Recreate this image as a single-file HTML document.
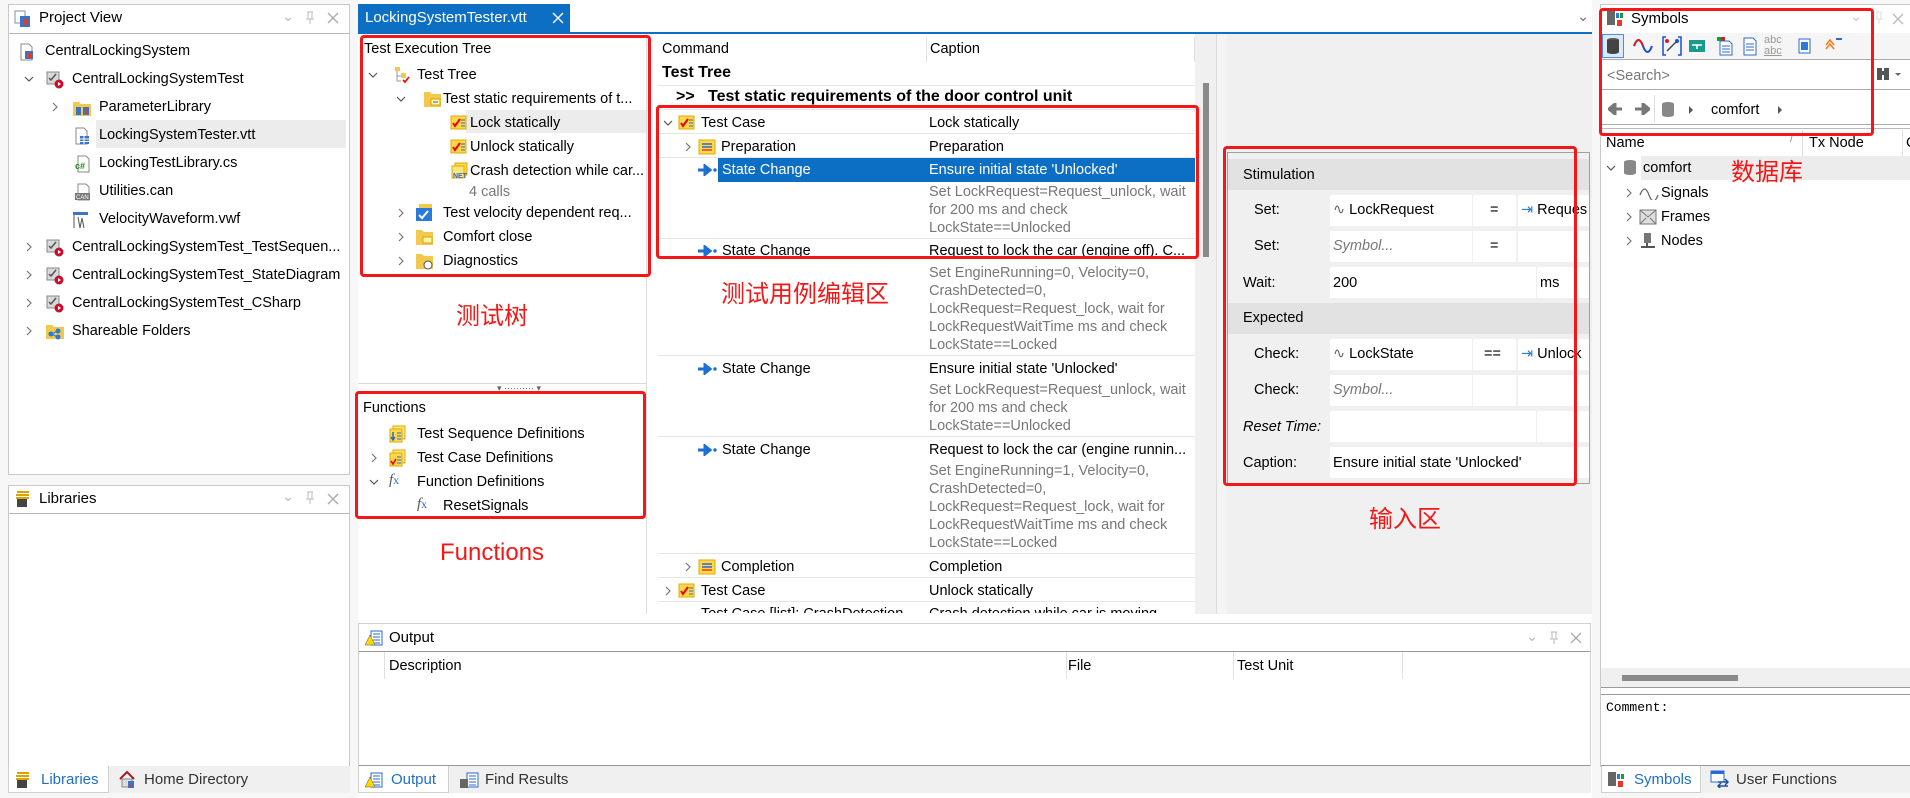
<!DOCTYPE html>
<html><head><meta charset="utf-8">
<style>
*{margin:0;padding:0;box-sizing:border-box}
body{width:1910px;height:798px;position:relative;overflow:hidden;background:#fff;font-family:"Liberation Sans","Noto Sans CJK SC",sans-serif}
.a{position:absolute}
.t{position:absolute;white-space:nowrap;font-size:14.5px;line-height:16px;color:#000}
.g{color:#777}
.b{font-weight:bold;font-size:16px}
.red{position:absolute;border:3px solid #f31717;border-radius:4px}
.cn{position:absolute;color:#f31717;font-size:24px;line-height:28px;white-space:nowrap;font-family:"Liberation Sans","Noto Sans CJK SC",sans-serif}
.hl{position:absolute;height:1px;background:#e6e6e6}
.cell{position:absolute;background:#fff}
</style></head><body>

<div class="a" style="left:0;top:0;width:358px;height:798px;background:#f7f7f7"></div>
<div class="a" style="left:1592px;top:0;width:318px;height:798px;background:#f7f7f7"></div>

<!-- ============ Project View ============ -->
<div class="a" style="left:8px;top:4px;width:342px;height:471px;border:1px solid #c9c9c9;background:#fff"></div>
<div class="a" style="left:9px;top:33px;width:340px;height:1px;background:#b5b5b5"></div>
<svg class="a" style="left:14px;top:10px" width="18" height="18"><rect x="1" y="1" width="10" height="12" fill="#fff" stroke="#7a8ca8"/><rect x="6" y="6" width="10" height="11" fill="#3a74c9"/><rect x="9" y="9" width="5" height="6" fill="#e53a2a"/></svg>
<div class="t" style="left:39px;top:10px;font-size:15px">Project View</div>
<div class="t g" style="left:282px;top:9px;color:#bbb">⌄</div>
<svg class="a" style="left:305px;top:11px" width="10" height="14"><path d="M2 1h6M3 1v7h4V1M1 8h8M5 8v5" stroke="#bbb" fill="none"/></svg>
<svg class="a" style="left:327px;top:12px" width="12" height="12"><path d="M1 1l10 10M11 1L1 11" stroke="#aaa" stroke-width="1.3"/></svg>

<div class="a" style="left:96px;top:120px;width:250px;height:28px;background:#ececec"></div>
<svg class="a" style="left:19px;top:43px" width="18" height="18"><path d="M2 1h8l3 3v13H2z" fill="#fff" stroke="#8a8a8a"/><rect x="6" y="8" width="8" height="8" fill="#3a74c9"/><rect x="8" y="10" width="4" height="5" fill="#e53a2a"/></svg>
<div class="t" style="left:45px;top:43px">CentralLockingSystem</div>

<svg class="a" style="left:24px;top:74px" width="10" height="10"><path d="M1 3l4 4 4-4" fill="none" stroke="#555" stroke-width="1.2"/></svg>
<svg class="a" style="left:46px;top:71px" width="18" height="18"><rect x="1" y="1" width="12" height="12" fill="#d9d9d9" stroke="#888"/><path d="M3 7l2 2 5-6" stroke="#555" stroke-width="1.5" fill="none"/><circle cx="13" cy="13" r="4.5" fill="#c8102e"/><path d="M12 11v4l3-2z" fill="#fff"/></svg>
<div class="t" style="left:72px;top:71px">CentralLockingSystemTest</div>

<svg class="a" style="left:50px;top:102px" width="10" height="10"><path d="M3 1l4 4-4 4" fill="none" stroke="#777" stroke-width="1.2"/></svg>
<svg class="a" style="left:72px;top:99px" width="20" height="18"><path d="M1 3h6l2 2h10v12H1z" fill="#f2c94c"/><rect x="4" y="8" width="5" height="8" fill="#3a74c9"/><rect x="11" y="8" width="6" height="8" fill="#3a74c9"/><rect x="13" y="10" width="3" height="5" fill="#e53a2a"/></svg>
<div class="t" style="left:99px;top:99px">ParameterLibrary</div>

<svg class="a" style="left:74px;top:127px" width="18" height="18"><path d="M2 1h8l3 3v13H2z" fill="#fff" stroke="#8a8a8a"/><rect x="6" y="9" width="9" height="8" fill="#3a74c9"/><path d="M6 12h9M6 14.5h9M10 9v8" stroke="#fff"/></svg>
<div class="t" style="left:99px;top:127px">LockingSystemTester.vtt</div>

<svg class="a" style="left:74px;top:155px" width="18" height="18"><path d="M4 1h8l3 3v13H4z" fill="#fff" stroke="#8a8a8a"/><text x="1" y="14" font-size="9" fill="#1a8a1a" font-family="Liberation Sans" font-weight="bold">c#</text></svg>
<div class="t" style="left:99px;top:155px">LockingTestLibrary.cs</div>

<svg class="a" style="left:74px;top:183px" width="18" height="18"><path d="M4 1h8l3 3v13H4z" fill="#fff" stroke="#8a8a8a"/><rect x="1" y="10" width="15" height="7" fill="#777"/><text x="2" y="16" font-size="6" fill="#fff" font-family="Liberation Sans">CAN</text></svg>
<div class="t" style="left:99px;top:183px">Utilities.can</div>

<svg class="a" style="left:72px;top:211px" width="18" height="18"><rect x="1" y="1" width="15" height="3" fill="#3a74c9"/><path d="M2 4v13M6 6l2 11 2-10 2 10" fill="none" stroke="#555"/></svg>
<div class="t" style="left:99px;top:211px">VelocityWaveform.vwf</div>

<svg class="a" style="left:24px;top:242px" width="10" height="10"><path d="M3 1l4 4-4 4" fill="none" stroke="#777" stroke-width="1.2"/></svg>
<svg class="a" style="left:46px;top:239px" width="18" height="18"><rect x="1" y="1" width="12" height="12" fill="#d9d9d9" stroke="#888"/><path d="M3 7l2 2 5-6" stroke="#555" stroke-width="1.5" fill="none"/><circle cx="13" cy="13" r="4.5" fill="#c8102e"/><path d="M12 11v4l3-2z" fill="#fff"/></svg>
<div class="t" style="left:72px;top:239px">CentralLockingSystemTest_TestSequen...</div>

<svg class="a" style="left:24px;top:270px" width="10" height="10"><path d="M3 1l4 4-4 4" fill="none" stroke="#777" stroke-width="1.2"/></svg>
<svg class="a" style="left:46px;top:267px" width="18" height="18"><rect x="1" y="1" width="12" height="12" fill="#d9d9d9" stroke="#888"/><path d="M3 7l2 2 5-6" stroke="#555" stroke-width="1.5" fill="none"/><circle cx="13" cy="13" r="4.5" fill="#c8102e"/><path d="M12 11v4l3-2z" fill="#fff"/></svg>
<div class="t" style="left:72px;top:267px">CentralLockingSystemTest_StateDiagram</div>

<svg class="a" style="left:24px;top:298px" width="10" height="10"><path d="M3 1l4 4-4 4" fill="none" stroke="#777" stroke-width="1.2"/></svg>
<svg class="a" style="left:46px;top:295px" width="18" height="18"><rect x="1" y="1" width="12" height="12" fill="#d9d9d9" stroke="#888"/><path d="M3 7l2 2 5-6" stroke="#555" stroke-width="1.5" fill="none"/><circle cx="13" cy="13" r="4.5" fill="#c8102e"/><path d="M12 11v4l3-2z" fill="#fff"/></svg>
<div class="t" style="left:72px;top:295px">CentralLockingSystemTest_CSharp</div>

<svg class="a" style="left:24px;top:326px" width="10" height="10"><path d="M3 1l4 4-4 4" fill="none" stroke="#777" stroke-width="1.2"/></svg>
<svg class="a" style="left:45px;top:322px" width="20" height="18"><path d="M1 3h6l2 2h10v12H1z" fill="#f2c94c"/><circle cx="6" cy="12" r="2.5" fill="#2a7ad8"/><circle cx="13" cy="9" r="2.5" fill="#2a7ad8"/><circle cx="13" cy="15" r="2.5" fill="#2a7ad8"/><path d="M6 12l7-3M6 12l7 3" stroke="#2a7ad8"/></svg>
<div class="t" style="left:72px;top:323px">Shareable Folders</div>

<!-- ============ Libraries ============ -->
<div class="a" style="left:8px;top:485px;width:342px;height:282px;border:1px solid #c9c9c9;background:#fff"></div>
<div class="a" style="left:9px;top:513px;width:340px;height:1px;background:#b5b5b5"></div>
<svg class="a" style="left:14px;top:490px" width="18" height="18"><path d="M3 2h12M2 5h13M2 8h13" stroke="#d9a400" stroke-width="2"/><rect x="3" y="9" width="10" height="8" fill="#444"/></svg>
<div class="t" style="left:39px;top:491px;font-size:15px">Libraries</div>
<div class="t g" style="left:282px;top:489px;color:#bbb">⌄</div>
<svg class="a" style="left:305px;top:491px" width="10" height="14"><path d="M2 1h6M3 1v7h4V1M1 8h8M5 8v5" stroke="#bbb" fill="none"/></svg>
<svg class="a" style="left:327px;top:493px" width="12" height="12"><path d="M1 1l10 10M11 1L1 11" stroke="#aaa" stroke-width="1.3"/></svg>
<div class="a" style="left:8px;top:766px;width:101px;height:27px;border:1px solid #d0d0d0;border-top:none;background:#fff"></div>
<div class="a" style="left:109px;top:766px;width:241px;height:27px;background:#f0f0f0"></div>
<svg class="a" style="left:14px;top:771px" width="18" height="18"><path d="M3 2h12M2 5h13M2 8h13" stroke="#d9a400" stroke-width="2"/><rect x="3" y="9" width="10" height="8" fill="#444"/></svg>
<div class="t" style="left:41px;top:772px;color:#1f6fc5;font-size:15px">Libraries</div>
<svg class="a" style="left:118px;top:770px" width="20" height="18"><path d="M2 9L9 2l7 7" fill="none" stroke="#a31b2a" stroke-width="2"/><rect x="4" y="9" width="10" height="8" fill="#ddd" stroke="#888"/><rect x="10" y="11" width="6" height="7" fill="#2a7ad8"/><rect x="11" y="13" width="3" height="4" fill="#e53a2a"/></svg>
<div class="t" style="left:144px;top:772px;color:#333;font-size:15px">Home Directory</div>

<!-- ============ Editor tab bar ============ -->
<div class="a" style="left:358px;top:4px;width:212px;height:29px;background:#0c6fc4"></div>
<div class="t" style="left:365px;top:10px;color:#fff;font-size:15px">LockingSystemTester.vtt</div>
<svg class="a" style="left:552px;top:12px" width="12" height="12"><path d="M1 1l10 10M11 1L1 11" stroke="#fff" stroke-width="1.4"/></svg>
<div class="a" style="left:358px;top:32px;width:1234px;height:2px;background:#0c6fc4"></div>
<div class="t" style="left:1577px;top:9px;color:#777">⌄</div>

<!-- ============ Test Execution Tree ============ -->
<div class="a" style="left:358px;top:34px;width:289px;height:350px;background:#fff"></div>
<div class="a" style="left:646px;top:34px;width:1px;height:580px;background:#ddd"></div>
<div class="a" style="left:358px;top:383px;width:289px;height:1px;background:#d8d8d8"></div>
<div class="t g" style="left:497px;top:380px;font-size:9px;color:#666">▾ ·········· ▾</div>
<div class="t" style="left:364px;top:41px">Test Execution Tree</div>
<svg class="a" style="left:368px;top:70px" width="10" height="10"><path d="M1 3l4 4 4-4" fill="none" stroke="#555" stroke-width="1.2"/></svg>
<svg class="a" style="left:394px;top:66px" width="18" height="18"><rect x="1" y="1" width="5" height="4" fill="#f2c94c"/><path d="M3 5v10h4M3 10h4" stroke="#999" fill="none"/><rect x="7" y="7" width="5" height="5" fill="#f2c94c"/><path d="M9 14l2 2 4-5" stroke="#e00" stroke-width="1.6" fill="none"/></svg>
<div class="t" style="left:417px;top:67px">Test Tree</div>
<svg class="a" style="left:396px;top:94px" width="10" height="10"><path d="M1 3l4 4 4-4" fill="none" stroke="#555" stroke-width="1.2"/></svg>
<svg class="a" style="left:423px;top:90px" width="20" height="18"><path d="M1 2h6l2 2h9v13H1z" fill="#f2c94c"/><rect x="8" y="9" width="9" height="6" fill="#fff3b0" stroke="#d9a400"/><path d="M10 12h5" stroke="#2a6ad0"/></svg>
<div class="t" style="left:443px;top:91px">Test static requirements of t...</div>
<div class="a" style="left:466px;top:110px;width:180px;height:23px;background:#ececec"></div>
<svg class="a" style="left:450px;top:114px" width="18" height="18"><rect x="1" y="2" width="15" height="13" fill="#ffd84a" stroke="#e0a800"/><path d="M3 9l2 3 5-7" stroke="#e00" stroke-width="2" fill="none"/><path d="M11 6h4M11 9h4M11 12h4" stroke="#2a6ad0"/></svg>
<div class="t" style="left:470px;top:115px">Lock statically</div>
<svg class="a" style="left:450px;top:138px" width="18" height="18"><rect x="1" y="2" width="15" height="13" fill="#ffd84a" stroke="#e0a800"/><path d="M3 9l2 3 5-7" stroke="#e00" stroke-width="2" fill="none"/><path d="M11 6h4M11 9h4M11 12h4" stroke="#2a6ad0"/></svg>
<div class="t" style="left:470px;top:139px">Unlock statically</div>
<svg class="a" style="left:450px;top:162px" width="18" height="18"><rect x="5" y="1" width="12" height="12" fill="#ffd84a" stroke="#e0a800"/><rect x="2" y="4" width="12" height="12" fill="#ffe680" stroke="#e0a800"/><text x="3" y="16" font-size="7" fill="#2a6ad0" font-family="Liberation Sans" font-weight="bold">NET</text></svg>
<div class="t" style="left:470px;top:163px">Crash detection while car...</div>
<div class="t g" style="left:469px;top:184px">4 calls</div>
<svg class="a" style="left:396px;top:208px" width="10" height="10"><path d="M3 1l4 4-4 4" fill="none" stroke="#777" stroke-width="1.2"/></svg>
<svg class="a" style="left:415px;top:203px" width="20" height="19"><rect x="4" y="1" width="13" height="5" fill="#f2c94c"/><rect x="1" y="5" width="16" height="13" fill="#2a7ad8"/><path d="M4 12l3 3 6-7" stroke="#fff" stroke-width="2" fill="none"/></svg>
<div class="t" style="left:443px;top:205px">Test velocity dependent req...</div>
<svg class="a" style="left:396px;top:232px" width="10" height="10"><path d="M3 1l4 4-4 4" fill="none" stroke="#777" stroke-width="1.2"/></svg>
<svg class="a" style="left:415px;top:228px" width="20" height="18"><path d="M1 2h6l2 2h9v13H1z" fill="#f2c94c"/><rect x="8" y="9" width="9" height="6" fill="#fff3b0" stroke="#d9a400"/></svg>
<div class="t" style="left:443px;top:229px">Comfort close</div>
<svg class="a" style="left:396px;top:256px" width="10" height="10"><path d="M3 1l4 4-4 4" fill="none" stroke="#777" stroke-width="1.2"/></svg>
<svg class="a" style="left:415px;top:252px" width="20" height="19"><path d="M1 2h6l2 2h9v13H1z" fill="#f2c94c"/><circle cx="13" cy="13" r="4" fill="#fff" stroke="#555"/></svg>
<div class="t" style="left:443px;top:253px">Diagnostics</div>
<div class="red" style="left:360px;top:35px;width:291px;height:242px"></div>
<div class="cn" style="left:456px;top:303px">测试树</div>

<!-- ============ Functions ============ -->
<div class="t" style="left:363px;top:400px">Functions</div>
<svg class="a" style="left:388px;top:425px" width="18" height="18"><rect x="5" y="1" width="12" height="13" fill="#ffe680" stroke="#e0a800"/><rect x="2" y="4" width="12" height="13" fill="#ffd84a" stroke="#e0a800"/><path d="M5 7v7M3 12l2 3 2-3" stroke="#2a6ad0" stroke-width="1.5" fill="none"/><path d="M9 8h4M9 11h4M9 14h4" stroke="#2a6ad0"/></svg>
<div class="t" style="left:417px;top:426px">Test Sequence Definitions</div>
<svg class="a" style="left:369px;top:453px" width="10" height="10"><path d="M3 1l4 4-4 4" fill="none" stroke="#777" stroke-width="1.2"/></svg>
<svg class="a" style="left:388px;top:449px" width="18" height="18"><rect x="5" y="1" width="12" height="13" fill="#ffe680" stroke="#e0a800"/><rect x="2" y="4" width="12" height="13" fill="#ffd84a" stroke="#e0a800"/><path d="M3 12l2 3 3-5" stroke="#e00" stroke-width="1.6" fill="none"/><path d="M9 8h4M9 11h4M9 14h4" stroke="#2a6ad0"/></svg>
<div class="t" style="left:417px;top:450px">Test Case Definitions</div>
<svg class="a" style="left:369px;top:477px" width="10" height="10"><path d="M1 3l4 4 4-4" fill="none" stroke="#555" stroke-width="1.2"/></svg>
<div class="t" style="left:389px;top:472px;font-family:'Liberation Serif',serif;font-style:italic;color:#555;font-size:15px">f<span style="color:#2a6ad0;font-style:normal;font-size:12px">x</span></div>
<div class="t" style="left:417px;top:474px">Function Definitions</div>
<div class="t" style="left:417px;top:496px;font-family:'Liberation Serif',serif;font-style:italic;color:#555;font-size:15px">f<span style="color:#2a6ad0;font-style:normal;font-size:12px">x</span></div>
<div class="t" style="left:443px;top:498px">ResetSignals</div>
<div class="red" style="left:355px;top:391px;width:291px;height:128px"></div>
<div class="cn" style="left:440px;top:539px">Functions</div>

<!-- ============ Grid ============ -->
<div class="a" style="left:656px;top:34px;width:560px;height:580px;background:#fff"></div>
<div class="a" style="left:1195px;top:34px;width:21px;height:580px;background:#f0f0f0"></div>
<div class="a" style="left:1203px;top:83px;width:6px;height:174px;background:#8a8a8a"></div>
<div class="a" style="left:1216px;top:34px;width:11px;height:580px;background:#f4f4f4;border-left:1px solid #ddd"></div>
<div class="a" style="left:926px;top:37px;width:1px;height:25px;background:#e0e0e0"></div>
<div class="a" style="left:1194px;top:37px;width:1px;height:25px;background:#e0e0e0"></div>
<div class="t" style="left:662px;top:41px">Command</div>
<div class="t" style="left:930px;top:41px">Caption</div>
<div class="t b" style="left:662px;top:65px">Test Tree</div>
<div class="hl" style="left:658px;top:85px;width:537px"></div>
<div class="t b" style="left:676px;top:89px">&gt;&gt;&nbsp;&nbsp;&nbsp;Test static requirements of the door control unit</div>
<div class="hl" style="left:658px;top:109px;width:537px"></div>

<svg class="a" style="left:663px;top:118px" width="10" height="10"><path d="M1 3l4 4 4-4" fill="none" stroke="#555" stroke-width="1.2"/></svg>
<svg class="a" style="left:678px;top:114px" width="18" height="18"><rect x="1" y="2" width="15" height="13" fill="#ffd84a" stroke="#e0a800"/><path d="M3 9l2 3 5-7" stroke="#e00" stroke-width="2" fill="none"/><path d="M11 6h4M11 9h4M11 12h4" stroke="#2a6ad0"/></svg>
<div class="t" style="left:701px;top:115px">Test Case</div>
<div class="t" style="left:929px;top:115px">Lock statically</div>
<div class="hl" style="left:658px;top:133px;width:537px"></div>
<svg class="a" style="left:683px;top:142px" width="10" height="10"><path d="M3 1l4 4-4 4" fill="none" stroke="#777" stroke-width="1.2"/></svg>
<svg class="a" style="left:698px;top:138px" width="18" height="18"><rect x="1" y="2" width="16" height="14" fill="#ffd84a" stroke="#e0a800"/><path d="M4 6h10M4 9h10" stroke="#2a6ad0" stroke-width="1.5"/><path d="M4 12h10" stroke="#e53a2a" stroke-width="1.5"/></svg>
<div class="t" style="left:721px;top:139px">Preparation</div>
<div class="t" style="left:929px;top:139px">Preparation</div>
<div class="hl" style="left:658px;top:157px;width:537px"></div>

<div class="a" style="left:718px;top:158px;width:477px;height:24px;background:#0c6fc4"></div>
<svg class="a" style="left:697px;top:164px" width="22" height="12"><path d="M1 6h9M8 2l5 4-5 4z" stroke="#1d6fd0" stroke-width="3" fill="#1d6fd0"/><circle cx="18" cy="6" r="1.7" fill="#1d6fd0"/></svg>
<div class="t" style="left:722px;top:162px;color:#fff">State Change</div>
<div class="t" style="left:929px;top:162px;color:#fff">Ensure initial state 'Unlocked'</div>
<div class="t g" style="left:929px;top:184px">Set LockRequest=Request_unlock, wait</div>
<div class="t g" style="left:929px;top:202px">for 200 ms and check</div>
<div class="t g" style="left:929px;top:220px">LockState==Unlocked</div>
<div class="hl" style="left:658px;top:238px;width:537px"></div>

<svg class="a" style="left:697px;top:245px" width="22" height="12"><path d="M1 6h9M8 2l5 4-5 4z" stroke="#1d6fd0" stroke-width="3" fill="#1d6fd0"/><circle cx="18" cy="6" r="1.7" fill="#1d6fd0"/></svg>
<div class="t" style="left:722px;top:243px">State Change</div>
<div class="t" style="left:929px;top:243px">Request to lock the car (engine off). C...</div>
<div class="t g" style="left:929px;top:265px">Set EngineRunning=0, Velocity=0,</div>
<div class="t g" style="left:929px;top:283px">CrashDetected=0,</div>
<div class="t g" style="left:929px;top:301px">LockRequest=Request_lock, wait for</div>
<div class="t g" style="left:929px;top:319px">LockRequestWaitTime ms and check</div>
<div class="t g" style="left:929px;top:337px">LockState==Locked</div>
<div class="hl" style="left:658px;top:355px;width:537px"></div>

<svg class="a" style="left:697px;top:363px" width="22" height="12"><path d="M1 6h9M8 2l5 4-5 4z" stroke="#1d6fd0" stroke-width="3" fill="#1d6fd0"/><circle cx="18" cy="6" r="1.7" fill="#1d6fd0"/></svg>
<div class="t" style="left:722px;top:361px">State Change</div>
<div class="t" style="left:929px;top:361px">Ensure initial state 'Unlocked'</div>
<div class="t g" style="left:929px;top:382px">Set LockRequest=Request_unlock, wait</div>
<div class="t g" style="left:929px;top:400px">for 200 ms and check</div>
<div class="t g" style="left:929px;top:418px">LockState==Unlocked</div>
<div class="hl" style="left:658px;top:436px;width:537px"></div>

<svg class="a" style="left:697px;top:444px" width="22" height="12"><path d="M1 6h9M8 2l5 4-5 4z" stroke="#1d6fd0" stroke-width="3" fill="#1d6fd0"/><circle cx="18" cy="6" r="1.7" fill="#1d6fd0"/></svg>
<div class="t" style="left:722px;top:442px">State Change</div>
<div class="t" style="left:929px;top:442px">Request to lock the car (engine runnin...</div>
<div class="t g" style="left:929px;top:463px">Set EngineRunning=1, Velocity=0,</div>
<div class="t g" style="left:929px;top:481px">CrashDetected=0,</div>
<div class="t g" style="left:929px;top:499px">LockRequest=Request_lock, wait for</div>
<div class="t g" style="left:929px;top:517px">LockRequestWaitTime ms and check</div>
<div class="t g" style="left:929px;top:535px">LockState==Locked</div>
<div class="hl" style="left:658px;top:553px;width:537px"></div>

<svg class="a" style="left:683px;top:562px" width="10" height="10"><path d="M3 1l4 4-4 4" fill="none" stroke="#777" stroke-width="1.2"/></svg>
<svg class="a" style="left:698px;top:558px" width="18" height="18"><rect x="1" y="2" width="16" height="14" fill="#ffd84a" stroke="#e0a800"/><path d="M4 6h10M4 9h10" stroke="#2a6ad0" stroke-width="1.5"/><path d="M4 12h10" stroke="#e53a2a" stroke-width="1.5"/></svg>
<div class="t" style="left:721px;top:559px">Completion</div>
<div class="t" style="left:929px;top:559px">Completion</div>
<div class="hl" style="left:658px;top:577px;width:537px"></div>
<svg class="a" style="left:663px;top:586px" width="10" height="10"><path d="M3 1l4 4-4 4" fill="none" stroke="#777" stroke-width="1.2"/></svg>
<svg class="a" style="left:678px;top:582px" width="18" height="18"><rect x="1" y="2" width="15" height="13" fill="#ffd84a" stroke="#e0a800"/><path d="M3 9l2 3 5-7" stroke="#e00" stroke-width="2" fill="none"/><path d="M11 6h4M11 9h4M11 12h4" stroke="#2a6ad0"/></svg>
<div class="t" style="left:701px;top:583px">Test Case</div>
<div class="t" style="left:929px;top:583px">Unlock statically</div>
<div class="hl" style="left:658px;top:601px;width:537px"></div>
<div class="a" style="left:658px;top:602px;width:537px;height:11px;overflow:hidden">
  <div class="t" style="left:43px;top:4px">Test Case [list]: CrashDetection</div>
  <div class="t" style="left:271px;top:4px">Crash detection while car is moving</div>
</div>
<div class="red" style="left:656px;top:105px;width:543px;height:154px"></div>
<div class="cn" style="left:721px;top:281px">测试用例编辑区</div>

<!-- ============ Input area ============ -->
<div class="a" style="left:1227px;top:34px;width:365px;height:580px;background:#f0f0f0"></div>
<div class="a" style="left:1227px;top:152px;width:363px;height:332px;border:1px solid #a0a0a0;background:#f0f0f0"></div>
<div class="a" style="left:1228px;top:159px;width:361px;height:31px;background:#e2e2e2"></div>
<div class="t" style="left:1243px;top:167px">Stimulation</div>
<div class="t" style="left:1254px;top:202px">Set:</div>
<div class="cell" style="left:1330px;top:195px;width:142px;height:31px"></div>
<div class="cell" style="left:1473px;top:195px;width:43px;height:31px"></div>
<div class="cell" style="left:1518px;top:195px;width:71px;height:31px"></div>
<div class="t" style="left:1333px;top:202px"><span style="color:#666">∿</span> LockRequest</div>
<div class="t" style="left:1490px;top:202px">=</div>
<div class="t" style="left:1521px;top:202px;width:66px;overflow:hidden"><span style="color:#2a7ad8">⇥</span> Request</div>
<div class="t" style="left:1254px;top:238px">Set:</div>
<div class="cell" style="left:1330px;top:231px;width:142px;height:31px"></div>
<div class="cell" style="left:1473px;top:231px;width:43px;height:31px"></div>
<div class="cell" style="left:1518px;top:231px;width:71px;height:31px"></div>
<div class="t g" style="left:1333px;top:238px;font-style:italic">Symbol...</div>
<div class="t" style="left:1490px;top:238px">=</div>
<div class="t" style="left:1243px;top:275px">Wait:</div>
<div class="cell" style="left:1330px;top:267px;width:206px;height:31px"></div>
<div class="cell" style="left:1537px;top:267px;width:52px;height:31px"></div>
<div class="t" style="left:1333px;top:275px">200</div>
<div class="t" style="left:1540px;top:275px">ms</div>
<div class="a" style="left:1228px;top:303px;width:361px;height:31px;background:#e2e2e2"></div>
<div class="t" style="left:1243px;top:310px">Expected</div>
<div class="t" style="left:1254px;top:346px">Check:</div>
<div class="cell" style="left:1330px;top:339px;width:142px;height:31px"></div>
<div class="cell" style="left:1473px;top:339px;width:43px;height:31px"></div>
<div class="cell" style="left:1518px;top:339px;width:71px;height:31px"></div>
<div class="t" style="left:1333px;top:346px"><span style="color:#666">∿</span> LockState</div>
<div class="t" style="left:1484px;top:346px">==</div>
<div class="t" style="left:1521px;top:346px;width:66px;overflow:hidden"><span style="color:#2a7ad8">⇥</span> Unlock</div>
<div class="t" style="left:1254px;top:382px">Check:</div>
<div class="cell" style="left:1330px;top:375px;width:142px;height:31px"></div>
<div class="cell" style="left:1473px;top:375px;width:43px;height:31px"></div>
<div class="cell" style="left:1518px;top:375px;width:71px;height:31px"></div>
<div class="t g" style="left:1333px;top:382px;font-style:italic">Symbol...</div>
<div class="t" style="left:1243px;top:419px;font-style:italic">Reset Time:</div>
<div class="cell" style="left:1330px;top:411px;width:206px;height:31px"></div>
<div class="cell" style="left:1537px;top:411px;width:52px;height:31px"></div>
<div class="t" style="left:1243px;top:455px">Caption:</div>
<div class="cell" style="left:1330px;top:447px;width:259px;height:31px"></div>
<div class="t" style="left:1333px;top:455px">Ensure initial state 'Unlocked'</div>
<div class="red" style="left:1223px;top:146px;width:354px;height:340px"></div>
<div class="cn" style="left:1369px;top:506px">输入区</div>

<!-- ============ Output ============ -->
<div class="a" style="left:358px;top:623px;width:1233px;height:144px;border:1px solid #d0d0d0"></div>
<svg class="a" style="left:365px;top:629px" width="18" height="18"><rect x="6" y="2" width="11" height="14" fill="#fff" stroke="#2a6ad0"/><path d="M8 5h7M8 8h7M8 11h7M8 14h7" stroke="#2a6ad0"/><path d="M5 6l5 10H0z" fill="#ffd800" stroke="#555" stroke-width=".5"/></svg>
<div class="t" style="left:389px;top:630px;font-size:15px">Output</div>
<div class="t" style="left:1526px;top:629px;color:#bbb">⌄</div>
<svg class="a" style="left:1549px;top:631px" width="10" height="14"><path d="M2 1h6M3 1v7h4V1M1 8h8M5 8v5" stroke="#bbb" fill="none"/></svg>
<svg class="a" style="left:1570px;top:632px" width="12" height="12"><path d="M1 1l10 10M11 1L1 11" stroke="#aaa" stroke-width="1.3"/></svg>
<div class="a" style="left:359px;top:651px;width:1231px;height:1px;background:#999"></div>
<div class="a" style="left:359px;top:765px;width:1231px;height:1px;background:#999"></div>
<div class="a" style="left:384px;top:652px;width:1px;height:27px;background:#e0e0e0"></div>
<div class="a" style="left:1066px;top:652px;width:1px;height:27px;background:#e0e0e0"></div>
<div class="a" style="left:1233px;top:652px;width:1px;height:27px;background:#e0e0e0"></div>
<div class="a" style="left:1402px;top:652px;width:1px;height:27px;background:#e0e0e0"></div>
<div class="t" style="left:389px;top:658px">Description</div>
<div class="t" style="left:1068px;top:658px">File</div>
<div class="t" style="left:1237px;top:658px">Test Unit</div>
<div class="a" style="left:358px;top:766px;width:91px;height:27px;border:1px solid #d0d0d0;border-top:none;background:#fff"></div>
<div class="a" style="left:449px;top:766px;width:1142px;height:27px;background:#f0f0f0"></div>
<svg class="a" style="left:365px;top:771px" width="18" height="18"><rect x="6" y="2" width="11" height="14" fill="#fff" stroke="#2a6ad0"/><path d="M8 5h7M8 8h7M8 11h7M8 14h7" stroke="#2a6ad0"/><path d="M5 6l5 10H0z" fill="#ffd800" stroke="#555" stroke-width=".5"/></svg>
<div class="t" style="left:391px;top:772px;color:#1f6fc5;font-size:15px">Output</div>
<svg class="a" style="left:459px;top:771px" width="20" height="18"><rect x="8" y="2" width="11" height="14" fill="#fff" stroke="#2a6ad0"/><path d="M10 5h7M10 8h7M10 11h7M10 14h7" stroke="#2a6ad0"/><rect x="1" y="8" width="8" height="9" fill="#666"/></svg>
<div class="t" style="left:485px;top:772px;color:#333;font-size:15px">Find Results</div>

<!-- ============ Symbols ============ -->
<div class="a" style="left:1600px;top:4px;width:310px;height:763px;border:1px solid #c9c9c9;border-right:none;background:#fff"></div>
<svg class="a" style="left:1606px;top:10px" width="18" height="18"><rect x="1" y="1" width="8" height="14" fill="#666"/><rect x="10" y="3" width="3" height="5" fill="#2a7ad8"/><rect x="14" y="3" width="3" height="5" fill="#1a9a3a"/><rect x="11" y="10" width="5" height="6" fill="#e53a2a"/></svg>
<div class="t" style="left:1631px;top:11px;font-size:15px">Symbols</div>
<div class="t" style="left:1850px;top:9px;color:#ccc">⌄</div>
<svg class="a" style="left:1874px;top:11px" width="10" height="14"><path d="M2 1h6M3 1v7h4V1M1 8h8M5 8v5" stroke="#ddd" fill="none"/></svg>
<svg class="a" style="left:1892px;top:13px" width="12" height="12"><path d="M1 1l10 10M11 1L1 11" stroke="#bbb" stroke-width="1.3"/></svg>
<div class="a" style="left:1601px;top:33px;width:309px;height:27px;background:#f5f5f5;border-bottom:1px solid #aaa"></div>
<div class="a" style="left:1602px;top:34px;width:22px;height:24px;border:1px solid #4a90e2;background:#dbe9f9"></div>
<svg class="a" style="left:1606px;top:37px" width="14" height="18"><ellipse cx="7" cy="3" rx="6" ry="2" fill="#555"/><rect x="1" y="3" width="12" height="12" fill="#444"/><ellipse cx="7" cy="15" rx="6" ry="2" fill="#444"/></svg>
<svg class="a" style="left:1633px;top:37px" width="20" height="18"><path d="M1 9c3-8 6-8 9 0s6 8 9 0" fill="none" stroke="#1d4fd0" stroke-width="2"/><path d="M1 9c3-8 6-8 9 0" fill="none" stroke="#d42020" stroke-width="2"/></svg>
<svg class="a" style="left:1662px;top:36px" width="20" height="20"><path d="M4 1H1v18h3M16 1h3v18h-3" stroke="#1d4fd0" fill="none" stroke-width="1.5"/><path d="M5 15l10-10" stroke="#444" stroke-width="1.5"/><circle cx="5" cy="5" r="2" fill="#d42020"/><circle cx="15" cy="5" r="2" fill="#1d4fd0"/></svg>
<svg class="a" style="left:1688px;top:39px" width="18" height="14"><rect x="1" y="1" width="16" height="12" fill="#1a9a8a"/><path d="M4 6h10M9 6v4" stroke="#fff" stroke-width="1.5"/></svg>
<svg class="a" style="left:1716px;top:36px" width="18" height="20"><rect x="1" y="1" width="4" height="4" fill="#1a9a3a"/><rect x="5" y="1" width="4" height="4" fill="#d42020"/><path d="M4 5h9l3 3v11H4z" fill="#fff" stroke="#2a6ad0"/><path d="M6 10h8M6 13h8M6 16h8" stroke="#2a6ad0"/></svg>
<svg class="a" style="left:1742px;top:36px" width="18" height="20"><path d="M2 2h9l3 3v14H2z" fill="#fff" stroke="#2a6ad0"/><path d="M4 8h8M4 11h8M4 14h8" stroke="#2a6ad0"/></svg>
<div class="t" style="left:1764px;top:35px;font-size:11px;line-height:11px;color:#999">abc<br><u>abc</u></div>
<svg class="a" style="left:1797px;top:37px" width="16" height="18"><rect x="2" y="2" width="11" height="14" fill="#fff" stroke="#2a6ad0"/><rect x="4" y="5" width="7" height="8" fill="#2a7ad8"/></svg>
<svg class="a" style="left:1824px;top:36px" width="20" height="16"><path d="M2 9l4-5 4 5M2 13l4-5 4 5" fill="none" stroke="#f08020" stroke-width="1.6"/><path d="M12 3h6" stroke="#2a6ad0" stroke-width="2"/></svg>
<div class="a" style="left:1601px;top:60px;width:309px;height:30px;background:#fff;border-bottom:1px solid #aaa"></div>
<div class="t" style="left:1607px;top:68px;color:#777">&lt;Search&gt;</div>
<svg class="a" style="left:1875px;top:64px" width="28" height="20"><rect x="2" y="4" width="5" height="12" fill="#555"/><rect x="9" y="4" width="5" height="12" fill="#555"/><rect x="5" y="7" width="6" height="4" fill="#555"/><path d="M20 9l3 3 3-3z" fill="#666"/></svg>
<div class="a" style="left:1601px;top:91px;width:309px;height:34px;background:#fff;border-bottom:1px solid #aaa"></div>
<svg class="a" style="left:1608px;top:103px" width="16" height="12"><path d="M14 6H5M7 1L1 6l6 5z" stroke="#777" stroke-width="3" fill="#777"/></svg>
<svg class="a" style="left:1634px;top:103px" width="16" height="12"><path d="M1 6h9M9 1l6 5-6 5z" stroke="#777" stroke-width="3" fill="#777"/></svg>
<div class="a" style="left:1654px;top:95px;width:1px;height:27px;background:#ddd"></div>
<svg class="a" style="left:1661px;top:101px" width="14" height="18"><ellipse cx="7" cy="3" rx="6" ry="2" fill="#888"/><rect x="1" y="3" width="12" height="11" fill="#888"/><ellipse cx="7" cy="14" rx="6" ry="2" fill="#888"/></svg>
<svg class="a" style="left:1689px;top:106px" width="5" height="8"><path d="M0 0l4 4-4 4z" fill="#555"/></svg>
<div class="t" style="left:1711px;top:102px">comfort</div>
<svg class="a" style="left:1778px;top:106px" width="5" height="8"><path d="M0 0l4 4-4 4z" fill="#555"/></svg>
<div class="a" style="left:1601px;top:128px;width:309px;height:1px;background:#bbb"></div>
<div class="t" style="left:1606px;top:135px">Name</div>
<div class="t" style="left:1790px;top:132px;font-size:10px;color:#888">/</div>
<div class="a" style="left:1802px;top:130px;width:1px;height:26px;background:#e0e0e0"></div>
<div class="t" style="left:1809px;top:135px">Tx Node</div>
<div class="a" style="left:1902px;top:130px;width:1px;height:26px;background:#e0e0e0"></div>
<div class="t" style="left:1906px;top:135px">C</div>
<div class="a" style="left:1641px;top:156px;width:269px;height:24px;background:#ececec"></div>
<svg class="a" style="left:1606px;top:163px" width="10" height="10"><path d="M1 3l4 4 4-4" fill="none" stroke="#555" stroke-width="1.2"/></svg>
<svg class="a" style="left:1623px;top:159px" width="14" height="18"><ellipse cx="7" cy="3" rx="6" ry="2" fill="#888"/><rect x="1" y="3" width="12" height="11" fill="#888"/><ellipse cx="7" cy="14" rx="6" ry="2" fill="#888"/></svg>
<div class="t" style="left:1643px;top:160px">comfort</div>
<svg class="a" style="left:1624px;top:188px" width="10" height="10"><path d="M3 1l4 4-4 4" fill="none" stroke="#777" stroke-width="1.2"/></svg>
<svg class="a" style="left:1639px;top:186px" width="20" height="14"><path d="M1 9c3-8 6-8 9 0s6 8 9 0" fill="none" stroke="#666" stroke-width="1.3"/></svg>
<div class="t" style="left:1661px;top:185px">Signals</div>
<svg class="a" style="left:1624px;top:212px" width="10" height="10"><path d="M3 1l4 4-4 4" fill="none" stroke="#777" stroke-width="1.2"/></svg>
<svg class="a" style="left:1639px;top:209px" width="18" height="16"><rect x="1" y="1" width="16" height="14" fill="#ddd" stroke="#777"/><path d="M1 1l8 7 8-7M1 15l6-6M17 15l-6-6" stroke="#777" fill="none"/></svg>
<div class="t" style="left:1661px;top:209px">Frames</div>
<svg class="a" style="left:1624px;top:236px" width="10" height="10"><path d="M3 1l4 4-4 4" fill="none" stroke="#777" stroke-width="1.2"/></svg>
<svg class="a" style="left:1640px;top:232px" width="16" height="18"><rect x="4" y="1" width="7" height="10" fill="#777"/><path d="M7 11v4M1 15h14" stroke="#555" stroke-width="2"/></svg>
<div class="t" style="left:1661px;top:233px">Nodes</div>
<div class="red" style="left:1599px;top:8px;width:275px;height:128px"></div>
<div class="cn" style="left:1731px;top:159px">数据库</div>
<div class="a" style="left:1601px;top:668px;width:309px;height:20px;background:#f0f0f0;border-bottom:1px solid #999"></div>
<div class="a" style="left:1622px;top:675px;width:116px;height:6px;background:#8a8a8a"></div>
<div class="a" style="left:1601px;top:694px;width:309px;height:1px;background:#999"></div>
<div class="t" style="left:1606px;top:700px;font-family:'Liberation Mono',monospace;font-size:13px">Comment:</div>
<div class="a" style="left:1601px;top:765px;width:309px;height:1px;background:#999"></div>
<div class="a" style="left:1601px;top:766px;width:100px;height:27px;border:1px solid #d0d0d0;border-top:none;background:#fff"></div>
<div class="a" style="left:1701px;top:766px;width:209px;height:27px;background:#f0f0f0"></div>
<svg class="a" style="left:1607px;top:771px" width="18" height="18"><rect x="1" y="1" width="8" height="14" fill="#666"/><rect x="10" y="3" width="3" height="5" fill="#2a7ad8"/><rect x="14" y="3" width="3" height="5" fill="#1a9a3a"/><rect x="11" y="10" width="5" height="6" fill="#e53a2a"/></svg>
<div class="t" style="left:1634px;top:772px;color:#1f6fc5;font-size:15px">Symbols</div>
<svg class="a" style="left:1710px;top:770px" width="20" height="18"><rect x="1" y="1" width="13" height="11" fill="#fff" stroke="#2a6ad0"/><rect x="1" y="1" width="13" height="3" fill="#2a6ad0"/><path d="M8 12h10M15 9l3 3-3 3M18 16H8M11 13l-3 3 3 3" stroke="#1d4fa0" fill="none" stroke-width="1.5"/></svg>
<div class="t" style="left:1736px;top:772px;color:#333;font-size:15px">User Functions</div>

</body></html>
